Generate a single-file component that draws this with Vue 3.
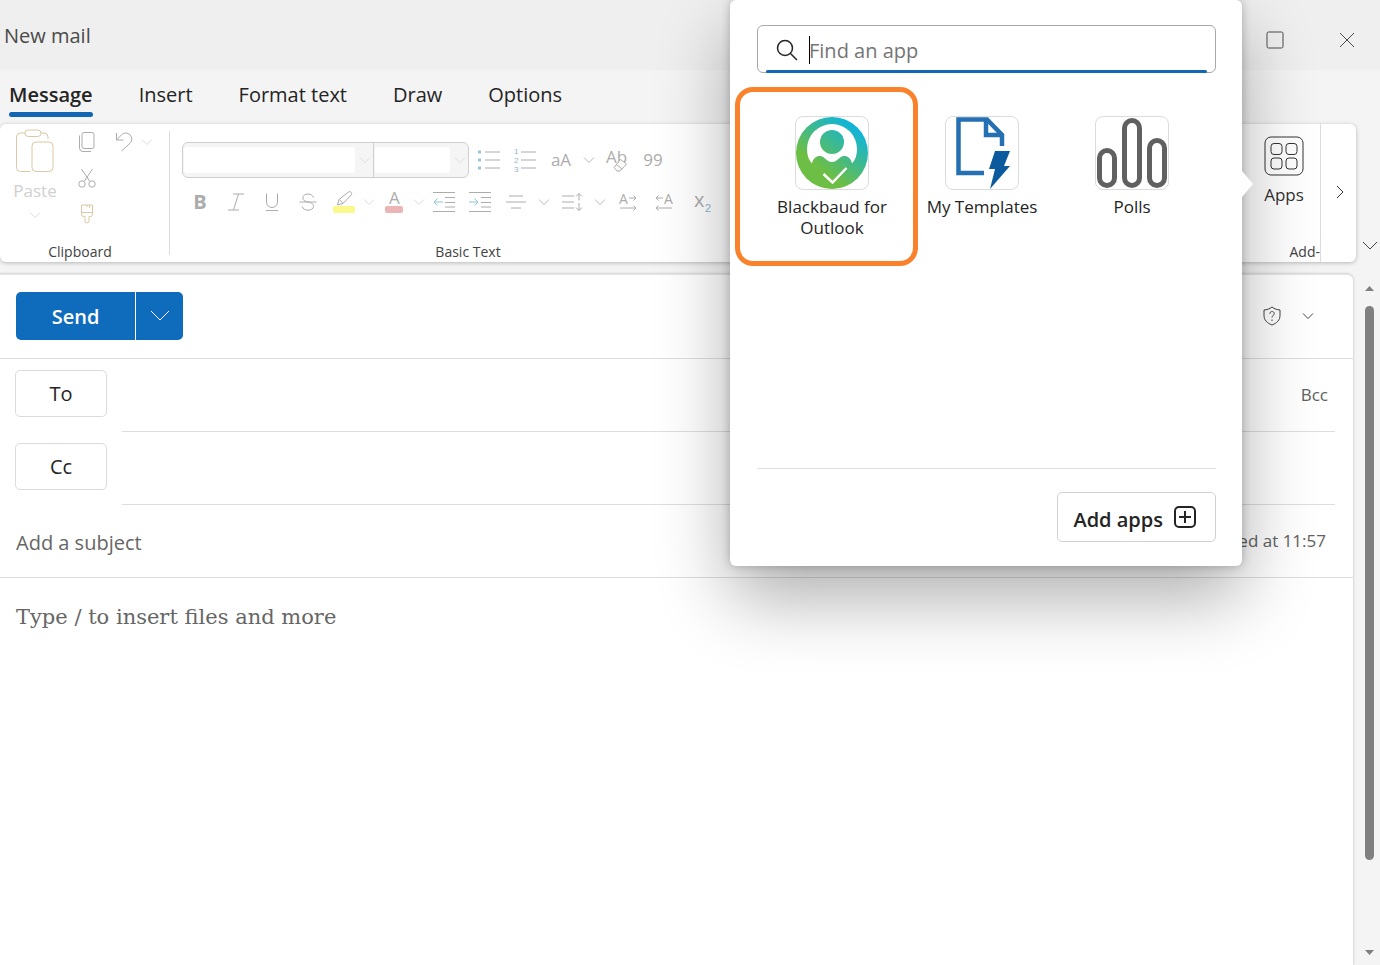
<template>
  <div class="window">
    <svg class="defs" aria-hidden="true">
      <symbol id="chevron" viewBox="0 0 12 12">
        <path d="M1 3.5l5 5 5-5" fill="none" stroke="currentColor" />
      </symbol>
    </svg>

    <header class="title-bar">
      <h1 class="title">New mail</h1>
      <div class="window-buttons">
        <button type="button" aria-label="Maximize">
          <svg width="18" height="18" viewBox="0 0 18 18">
            <rect x="1" y="1" width="16" height="16" rx="1.5" />
          </svg>
        </button>
        <button type="button" aria-label="Close">
          <svg width="18" height="18" viewBox="0 0 18 18">
            <path d="M2 2l14 14M16 2L2 16" />
          </svg>
        </button>
      </div>
    </header>

    <nav class="tabs">
      <button
        v-for="tab in tabs"
        :key="tab"
        type="button"
        :class="['tab', { active: tab === activeTab }]"
        @click="activeTab = tab"
      >
        {{ tab }}
      </button>
    </nav>

    <div class="ribbon-row">
      <div class="ribbon">
        <section class="group clipboard">
          <div class="clipboard-tools">
            <button type="button" class="paste" disabled>
              <svg width="40" height="44" viewBox="0 0 40 44" class="tan">
                <path d="M10 4H5.500a4 4 0 0 0-4 4v30.500a4 4 0 0 0 4 4H15M26 4h3a4 4 0 0 1 4 4v2" />
                <rect x="10" y="1" width="16" height="6.500" rx="3.200" />
                <rect x="17" y="13" width="21" height="29.500" rx="4" />
              </svg>
              <span>Paste</span>
              <svg class="chevron faint" width="12" height="12"><use href="#chevron" /></svg>
            </button>
            <div class="clipboard-small">
              <button type="button" aria-label="Copy" disabled>
                <svg width="20" height="22" viewBox="0 0 20 22">
                  <rect x="5" y="1.500" width="12" height="16" rx="2" />
                  <path d="M2.500 4.500v12.500a3.500 3.500 0 0 0 3.500 3.500h8" />
                </svg>
              </button>
              <button type="button" aria-label="Cut" disabled>
                <svg width="20" height="22" viewBox="0 0 20 22">
                  <path d="M4.500 2l8 12M15.500 2l-8 12" />
                  <circle cx="5" cy="17" r="3.200" />
                  <circle cx="15" cy="17" r="3.200" />
                </svg>
              </button>
              <button type="button" aria-label="Format painter" disabled>
                <svg width="20" height="22" viewBox="0 0 20 22" class="tan">
                  <path
                    d="M4.500 2h11v9.500a2 2 0 0 1-2 2h-1.500v4.500a2 2 0 0 1-4 0v-4.500h-1.500a2 2 0 0 1-2-2zM4.500 9.500h11M12.500 2v3M10 2v2"
                  />
                </svg>
              </button>
            </div>
            <div class="undo">
              <button type="button" aria-label="Undo" disabled>
                <svg width="20" height="22" viewBox="0 0 20 22">
                  <path d="M2.500 2v7h7M2.500 9l5-5.200a6 6 0 0 1 8.600 8.400L7.500 20" />
                </svg>
              </button>
              <svg class="chevron faint" width="12" height="12"><use href="#chevron" /></svg>
            </div>
          </div>
          <span class="group-label">Clipboard</span>
        </section>

        <section class="group basic-text">
          <div class="tool-rows">
            <div class="tool-row">
              <div class="combo font-name">
                <select aria-label="Font" disabled></select>
                <svg class="chevron faint" width="12" height="12"><use href="#chevron" /></svg>
              </div>
              <div class="combo font-size">
                <select aria-label="Font size" disabled></select>
                <svg class="chevron faint" width="12" height="12"><use href="#chevron" /></svg>
              </div>
              <button type="button" class="tool" aria-label="Bullets" disabled>
                <svg width="24" height="24" viewBox="0 0 24 24">
                  <path d="M8 4h15M8 12h15M8 20h15" />
                  <path class="blue-fill" d="M1 2.500h3v3H1zM1 10.500h3v3H1zM1 18.500h3v3H1z" />
                </svg>
              </button>
              <button type="button" class="tool" aria-label="Numbering" disabled>
                <svg width="24" height="24" viewBox="0 0 24 24">
                  <path d="M8 4h15M8 12h15M8 20h15" />
                  <text class="digit" x="1" y="6">1</text>
                  <text class="digit" x="1" y="15">2</text>
                  <text class="digit" x="1" y="24">3</text>
                </svg>
              </button>
              <button type="button" class="tool glyph" disabled>aA</button>
              <span class="drop wide">
                <svg class="chevron" width="12" height="12"><use href="#chevron" /></svg>
              </span>
              <button type="button" class="tool" aria-label="Clear formatting" disabled>
                <svg width="24" height="24" viewBox="0 0 24 24">
                  <text class="letter" x="1" y="15">Ab</text>
                  <path class="cover" d="M15.500 11.500l6 4.500-6.500 7h-3l-3-3.500zM11.500 16.500l5.500 4.500" />
                </svg>
              </button>
              <button type="button" class="tool glyph" aria-label="Quote" disabled>99</button>
            </div>

            <div class="tool-row">
              <button type="button" class="tool bold" aria-label="Bold" disabled>B</button>
              <button type="button" class="tool" aria-label="Italic" disabled>
                <svg width="20" height="20" viewBox="0 0 20 20">
                  <path d="M7 2h11M2 18h11M12.500 2l-5 16" />
                </svg>
              </button>
              <button type="button" class="tool" aria-label="Underline" disabled>
                <svg width="20" height="20" viewBox="0 0 20 20">
                  <path d="M4.500 1.500v8.500a5.500 5.500 0 0 0 11 0V1.500M4 18.500h12" />
                </svg>
              </button>
              <button type="button" class="tool" aria-label="Strikethrough" disabled>
                <svg width="20" height="20" viewBox="0 0 20 20">
                  <path
                    d="M15.500 5.500C14.500 3 12.500 2 10 2 7 2 4.800 3.600 4.800 6c0 2 1.500 3.200 5.200 4 3.900.9 5.500 2 5.500 4.200 0 2.500-2.300 4-5.500 4-2.800 0-5-1.300-5.800-3.700M1.500 10h17"
                  />
                </svg>
              </button>
              <button type="button" class="tool" aria-label="Highlight" disabled>
                <svg width="24" height="24" viewBox="0 0 24 24">
                  <rect class="yellow" x="1" y="16" width="22" height="7" rx="2" />
                  <path
                    d="M5.500 15l1.500-5.500 9.500-7.500c2.200-1.200 4.200 1 2.700 3L11 13.500zM7.500 9.500l3.500 4"
                  />
                </svg>
              </button>
              <span class="drop">
                <svg class="chevron faint" width="12" height="12"><use href="#chevron" /></svg>
              </span>
              <button type="button" class="tool" aria-label="Font color" disabled>
                <svg width="24" height="24" viewBox="0 0 24 24">
                  <text class="letter" x="7" y="14">A</text>
                  <rect class="red" x="3" y="16" width="18" height="7" rx="2" />
                </svg>
              </button>
              <span class="drop">
                <svg class="chevron faint" width="12" height="12"><use href="#chevron" /></svg>
              </span>
              <button type="button" class="tool" aria-label="Decrease indent" disabled>
                <svg width="24" height="24" viewBox="0 0 24 24">
                  <path d="M1 2.500h22M13 7.500h10M13 12.500h10M13 17h10M1 21.500h22" />
                  <path class="blue" d="M11 12H2M5.500 8.500L2 12l3.500 3.500" />
                </svg>
              </button>
              <button type="button" class="tool" aria-label="Increase indent" disabled>
                <svg width="24" height="24" viewBox="0 0 24 24">
                  <path d="M1 2.500h22M13 7.500h10M13 12.500h10M13 17h10M1 21.500h22" />
                  <path class="blue" d="M1 12h9M6.500 8.500L10 12l-3.500 3.500" />
                </svg>
              </button>
              <button type="button" class="tool" aria-label="Align" disabled>
                <svg width="20" height="20" viewBox="0 0 20 20">
                  <path d="M3 4h14M0 10h20M5 16h10" />
                </svg>
              </button>
              <span class="drop wide">
                <svg class="chevron" width="12" height="12"><use href="#chevron" /></svg>
              </span>
              <button type="button" class="tool" aria-label="Line spacing" disabled>
                <svg width="22" height="20" viewBox="0 0 22 20">
                  <path d="M1 4h12M1 10h12M1 16h12M18 1.500v7M15 4.500l3-3 3 3M18 11v7.500M15 15.500l3 3 3-3" />
                </svg>
              </button>
              <span class="drop wide">
                <svg class="chevron" width="12" height="12"><use href="#chevron" /></svg>
              </span>
              <button type="button" class="tool" aria-label="Left to right" disabled>
                <svg width="20" height="20" viewBox="0 0 20 20">
                  <text class="letter small" x="1" y="12">A</text>
                  <path d="M11 6h7M15.500 3.500L18 6l-2.500 2.500M2 16h16M15.500 13.500L18 16l-2.500 2.500" />
                </svg>
              </button>
              <button type="button" class="tool" aria-label="Right to left" disabled>
                <svg width="20" height="20" viewBox="0 0 20 20">
                  <text class="letter small" x="10" y="12">A</text>
                  <path d="M9 6H2M4.500 3.500L2 6l2.500 2.500M18 16H2M4.500 13.500L2 16l2.500 2.500" />
                </svg>
              </button>
              <button type="button" class="tool last" aria-label="Subscript" disabled>
                <svg width="20" height="20" viewBox="0 0 20 20">
                  <text class="letter large" x="1" y="15">x</text>
                  <text class="digit sub" x="12" y="20">2</text>
                </svg>
              </button>
            </div>
          </div>
          <span class="group-label">Basic Text</span>
        </section>

        <section class="group addins">
          <button type="button" class="apps">
            <svg width="40" height="40" viewBox="0 0 40 40">
              <rect x="1" y="1" width="38" height="38" rx="6" />
              <rect x="7" y="7.500" width="11" height="11" rx="3" />
              <rect x="22" y="7.500" width="11" height="11" rx="3" />
              <rect x="7" y="22" width="11" height="11" rx="3" />
              <rect x="22" y="22" width="11" height="11" rx="3" />
            </svg>
            <span>Apps</span>
          </button>
          <span class="group-label">Add-</span>
        </section>

        <button type="button" class="scroll-right" aria-label="More commands">
          <svg width="8" height="14" viewBox="0 0 8 14"><path d="M1 1l6 6-6 6" /></svg>
        </button>
      </div>
      <button type="button" class="collapse" aria-label="Ribbon options">
        <svg width="16" height="10" viewBox="0 0 16 10"><path d="M1 1l7 7 7-7" /></svg>
      </button>
    </div>

    <div class="compose-row">
      <main class="compose">
        <div class="send-row">
          <div class="send-split">
            <button type="button" class="send">Send</button>
            <button type="button" class="send-more" aria-label="More send options">
              <svg width="20" height="12" viewBox="0 0 20 12"><path d="M1 1l9 9 9-9" /></svg>
            </button>
          </div>
          <button type="button" class="sensitivity" aria-label="Sensitivity">
            <svg width="20" height="20" viewBox="0 0 20 20">
              <path
                d="M10 1c2.500 2 5 2.800 8 3v5.500c0 4.500-3 7.500-8 9.500-5-2-8-5-8-9.500V4c3-.2 5.500-1 8-3z"
              />
              <path d="M7.800 7.800c0-3 4.400-3 4.400-.2 0 1.800-2.200 2-2.200 4M10 13.500v1.500" />
            </svg>
            <svg class="chevron" width="12" height="12"><use href="#chevron" /></svg>
          </button>
        </div>

        <div class="recipient">
          <button type="button" class="recipient-button">To</button>
          <div class="field">
            <input v-model="to" type="text" aria-label="To" />
            <a href="#" class="bcc" @click.prevent>Bcc</a>
          </div>
        </div>
        <div class="recipient">
          <button type="button" class="recipient-button">Cc</button>
          <div class="field">
            <input v-model="cc" type="text" aria-label="Cc" />
          </div>
        </div>
        <div class="subject">
          <input v-model="subject" type="text" aria-label="Subject" placeholder="Add a subject" />
          <span class="saved">Draft saved at 11:57</span>
        </div>
        <textarea
          v-model="body"
          class="body"
          aria-label="Message body"
          placeholder="Type / to insert files and more"
        ></textarea>
      </main>

      <div class="scrollbar">
        <svg width="9" height="5" viewBox="0 0 9 5"><path d="M4.500 0L9 5H0z" /></svg>
        <div class="track">
          <div class="thumb" :style="{ height: thumbSize + '%' }"></div>
        </div>
        <svg width="9" height="5" viewBox="0 0 9 5"><path d="M0 0h9L4.500 5z" /></svg>
      </div>
    </div>

    <aside class="flyout">
      <label class="search">
        <svg width="22" height="22" viewBox="0 0 22 22">
          <circle cx="9" cy="9" r="7.500" />
          <path d="M14.500 14.500L21 21" />
        </svg>
        <span class="caret"></span>
        <input v-model="query" type="text" aria-label="Find an app" placeholder="Find an app" />
      </label>

      <div class="apps-grid">
        <button type="button" class="app highlighted">
          <span class="app-icon">
            <svg width="72" height="72" viewBox="0 0 72 72">
              <defs>
                <linearGradient
                  id="badge"
                  gradientUnits="userSpaceOnUse"
                  x1="60"
                  y1="8"
                  x2="26"
                  y2="52"
                >
                  <stop offset="0" stop-color="#0cb4e0" />
                  <stop offset="0.5" stop-color="#3cb991" />
                  <stop offset="1" stop-color="#6cbe45" />
                </linearGradient>
              </defs>
              <circle cx="36" cy="36" r="36" fill="url(#badge)" />
              <path
                fill="#fff"
                d="M36 7a25 25 0 0 0-25 25c0 6 1.500 11 5 14.500 1-5 4-7.500 8-7.500 5 0 6 6 12 6s7-6 12-6c4 0 7 2.500 8 7.500 3.500-3.500 5-8.500 5-14.500A25 25 0 0 0 36 7z"
              />
              <circle cx="36" cy="25" r="12" fill="url(#badge)" />
              <path d="M27.500 57l9 8.500 14-14.500" fill="none" stroke="#fff" stroke-width="2.500" />
            </svg>
          </span>
          <span>Blackbaud for Outlook</span>
        </button>
        <button type="button" class="app">
          <span class="app-icon">
            <svg width="72" height="72" viewBox="0 0 72 72">
              <g fill="none" stroke="#2470b3" stroke-width="4.500">
                <path d="M38 56H12.500V2.500H41L56 18v11" />
                <path d="M40 2v16h17" />
              </g>
              <path fill="#0b5a9d" d="M49 34h15l-6 15h6L44 72l5-20h-6z" />
            </svg>
          </span>
          <span>My Templates</span>
        </button>
        <button type="button" class="app">
          <span class="app-icon">
            <svg width="72" height="72" viewBox="0 0 72 72">
              <g fill="none" stroke="#606060" stroke-width="5">
                <rect x="3.500" y="33.500" width="15" height="35" rx="7.500" />
                <rect x="28.500" y="3.500" width="15" height="65" rx="7.500" />
                <rect x="53.500" y="23.500" width="15" height="45" rx="7.500" />
              </g>
            </svg>
          </span>
          <span>Polls</span>
        </button>
      </div>

      <div class="flyout-footer">
        <button type="button" class="add-apps">
          <span>Add apps</span>
          <svg width="24" height="24" viewBox="0 0 24 24">
            <rect x="2" y="2" width="20" height="20" rx="4" />
            <path d="M12 6v12M6 12h12" />
          </svg>
        </button>
      </div>
    </aside>
  </div>
</template>

<script setup>
import { ref } from "vue";

const tabs = ["Message", "Insert", "Format text", "Draw", "Options"];
const activeTab = ref("Message");

const to = ref("");
const cc = ref("");
const subject = ref("");
const body = ref("");
const query = ref("");

// share of the track taken by the scroll thumb, in percent
const thumbSize = 88;
</script>

<style>
body {
  margin: 0;
}
</style>

<style scoped>
.window {
  position: relative;
  display: flex;
  flex-direction: column;
  min-height: 100vh;
  overflow: hidden;
  background: #f4f4f4;
  color: #242424;
  font-family: "Open Sans", "Noto Sans", sans-serif;
  font-size: 20px;
  line-height: 28px;
}

.window *,
.window *::before,
.window *::after {
  box-sizing: border-box;
}

.defs {
  position: absolute;
  width: 0;
  height: 0;
}

button,
input,
select,
textarea {
  margin: 0;
  padding: 0;
  border: none;
  outline: none;
  background: none;
  color: inherit;
  font: inherit;
}

svg {
  display: block;
  flex: none;
  overflow: visible;
  fill: none;
  stroke: currentColor;
}

/* Title bar */
.title-bar {
  display: flex;
  align-items: center;
  justify-content: space-between;
  height: 70px;
  padding-left: 4px;
  background: #efefef;
  color: #4a4a4a;
}

.title {
  margin: 0;
  padding-top: 2px;
  font-size: 20px;
  font-weight: 400;
}

.window-buttons {
  display: flex;
  gap: 6px;
  padding-top: 10px;
}

.window-buttons button {
  display: flex;
  align-items: center;
  justify-content: center;
  width: 66px;
  height: 40px;
}

/* Tabs */
.tabs {
  display: flex;
  gap: 46px;
  height: 54px;
  padding: 11px 9px 7px;
}

.tab {
  height: 36px;
  padding-bottom: 4px;
  border-bottom: 5px solid transparent;
  white-space: nowrap;
}

.tab.active {
  position: relative;
  font-weight: 600;
}

.tab.active::after {
  content: "";
  position: absolute;
  right: 0;
  bottom: -5px;
  left: 0;
  height: 5px;
  border-radius: 3px;
  background: #1267b4;
}

/* Ribbon */
.ribbon-row {
  display: flex;
  height: 138px;
}

.ribbon {
  display: flex;
  flex: 1;
  min-width: 0;
  border-radius: 6px;
  background: #fff;
  box-shadow: 0 1px 4px rgba(0, 0, 0, 0.25);
  color: #acacac;
}

.group {
  display: flex;
  flex-direction: column;
  justify-content: space-between;
}

.group-label {
  color: #424242;
  font-size: 14px;
  line-height: 20px;
  text-align: center;
}

.clipboard {
  position: relative;
  width: 170px;
  padding: 5px 0 0;
}

.clipboard .group-label {
  padding-right: 10px;
}

.clipboard::after {
  content: "";
  position: absolute;
  top: 7px;
  right: 0;
  bottom: 7px;
  border-right: 1px solid #dcdcdc;
}

.clipboard-tools {
  display: flex;
}

.paste {
  display: flex;
  flex-direction: column;
  align-items: center;
  width: 70px;
  color: #d0d0d0;
  font-size: 17px;
  line-height: 36px;
}

.tan {
  color: #dac8a4;
}

.clipboard-small {
  display: flex;
  flex-direction: column;
  gap: 14px;
  padding: 2px 7px;
}

.undo {
  display: flex;
  align-items: center;
  align-self: flex-start;
  gap: 7px;
  padding: 2px 0 0 10px;
}

.chevron {
  color: #b8b8b8;
}

.chevron.faint {
  color: #dcdcdc;
}

.basic-text {
  width: 596px;
  padding: 18px 12px 0;
}

.tool-rows {
  display: flex;
  flex-direction: column;
  gap: 6px;
}

.tool-row {
  display: flex;
  align-items: center;
  height: 36px;
}

.combo {
  display: flex;
  align-items: center;
  justify-content: space-between;
  height: 36px;
  padding: 5px 2px 5px 1px;
  border: 1px solid #cfcfcf;
  background: #f5f5f5;
}

.combo select {
  flex: 1;
  height: 26px;
  margin-right: 4px;
  border-radius: 3px;
  background: #fff;
  opacity: 1;
  appearance: none;
}

.font-name {
  width: 192px;
  border-radius: 6px 0 0 6px;
}

.font-size {
  width: 96px;
  margin-left: -1px;
  margin-right: 2px;
  border-radius: 0 6px 6px 0;
}

.tool {
  display: flex;
  align-items: center;
  justify-content: center;
  width: 36px;
  height: 36px;
}

.tool.last {
  width: 42px;
}

.tool.glyph {
  font-size: 17px;
}

.tool.bold {
  font-weight: 700;
}

.drop {
  display: flex;
  justify-content: center;
  width: 14px;
}

.drop.wide {
  width: 20px;
}

.letter {
  fill: currentColor;
  stroke: none;
  font-size: 17px;
}

.letter.small {
  font-size: 14px;
}

.letter.large {
  font-size: 20px;
}

.digit {
  fill: #8db8d2;
  stroke: none;
  font-family: "Liberation Sans", sans-serif;
  font-size: 8px;
}

.digit.sub {
  font-size: 11px;
}

.cover {
  fill: #fff;
}

.blue {
  stroke: #8fc3dd;
}

.blue-fill {
  fill: #9cc4d8;
  stroke: none;
}

.yellow {
  fill: #fbf98c;
  stroke: none;
}

.red {
  fill: #ebb5b5;
  stroke: none;
}

.addins {
  width: 80px;
  margin-left: auto;
  padding: 12px 0 0;
  color: #4a4a4a;
}

.addins .group-label {
  text-align: right;
}

.apps {
  display: flex;
  flex-direction: column;
  align-items: center;
  gap: 5px;
  width: 88px;
  color: #333;
  font-size: 17px;
}

.scroll-right {
  display: flex;
  align-items: center;
  justify-content: center;
  width: 36px;
  padding: 0 0 2px 2px;
  border-left: 1px solid #dcdcdc;
  border-radius: 0 6px 6px 0;
  color: #333;
}

.collapse {
  display: flex;
  align-items: flex-end;
  justify-content: flex-end;
  width: 24px;
  padding: 0 2px 11px 0;
  color: #444;
}

.sensitivity .chevron {
  color: #444;
}

/* Compose pane */
.compose-row {
  display: flex;
  flex: 1;
  margin-top: 12px;
}

.compose {
  display: flex;
  flex: 1;
  flex-direction: column;
  min-width: 0;
  border-top: 1px solid #e4e4e4;
  border-radius: 0 6px 0 0;
  background: #fff;
  box-shadow: 0 0 3px rgba(0, 0, 0, 0.25);
}

.send-row {
  display: flex;
  align-items: center;
  justify-content: space-between;
  height: 84px;
  padding: 0 39px 2px 16px;
  border-bottom: 1px solid #dedede;
}

.send-split {
  display: flex;
  height: 48px;
  border-radius: 5px;
  overflow: hidden;
  background: #0f6cbd;
  color: #fff;
}

.send {
  width: 120px;
  padding-top: 2px;
  border-right: 1px solid #fff;
  font-weight: 600;
}

.send-more {
  display: flex;
  align-items: center;
  justify-content: center;
  width: 47px;
}

.sensitivity {
  display: flex;
  align-items: center;
  gap: 20px;
  color: #424242;
}

.recipient {
  display: flex;
  align-items: center;
  gap: 15px;
  height: 73px;
  padding: 0 18px 0 15px;
}

.recipient-button {
  width: 92px;
  height: 47px;
  margin-bottom: 4px;
  border: 1px solid #dcdcdc;
  border-radius: 5px;
  font-weight: 500;
}

.field {
  display: flex;
  flex: 1;
  align-items: center;
  align-self: stretch;
  padding-right: 7px;
  border-bottom: 1px solid #dedede;
}

.field input,
.subject input {
  flex: 1;
  min-width: 0;
}

.subject input {
  padding-top: 4px;
}

.bcc,
.saved {
  color: #616161;
  font-size: 17px;
  text-decoration: none;
}

.subject {
  display: flex;
  align-items: center;
  height: 73px;
  padding: 0 27px 0 16px;
  border-bottom: 1px solid #dedede;
}

input::placeholder,
textarea::placeholder {
  color: #666;
  opacity: 1;
}

.body {
  flex: 1;
  width: 100%;
  padding: 25px 16px;
  resize: none;
  font-family: "DejaVu Serif", "Liberation Serif", serif;
  font-size: 21px;
}

.scrollbar {
  display: flex;
  flex-direction: column;
  align-items: center;
  gap: 15px;
  width: 27px;
  padding: 12px 0 10px 6px;
}

.scrollbar svg {
  fill: #7f7f7f;
  stroke: none;
}

.track {
  flex: 1;
  width: 9px;
}

.thumb {
  border-radius: 5px;
  background: #808080;
}

/* Apps flyout */
.flyout {
  position: absolute;
  top: 0;
  right: 138px;
  width: 512px;
  padding: 25px 26px 24px 27px;
  border-radius: 6px;
  background: #fff;
  box-shadow:
    0 32px 72px rgba(0, 0, 0, 0.32),
    0 0 10px rgba(0, 0, 0, 0.24);
}

.flyout::after {
  content: "";
  position: absolute;
  top: 171px;
  left: 100%;
  border: 13px solid transparent;
  border-right-width: 0;
  border-left: 11px solid #fff;
}

.search {
  position: relative;
  display: flex;
  align-items: center;
  height: 48px;
  padding: 2px 18px 0;
  border: 1px solid #a8a8a8;
  border-radius: 6px;
}

.search::after {
  content: "";
  position: absolute;
  right: 8px;
  bottom: -1px;
  left: 8px;
  height: 3px;
  border-radius: 2px;
  background: #1267b4;
}

.search svg {
  stroke-width: 1.5;
}

.caret {
  width: 1px;
  height: 28px;
  margin-right: -1px;
  margin-left: 11px;
  background: #000;
}

.search input {
  flex: 1;
  min-width: 0;
  padding-top: 2px;
}

.search input::placeholder {
  color: #757575;
}

.apps-grid {
  display: flex;
  align-items: flex-start;
  min-height: 395px;
  padding-top: 43px;
}

.app {
  display: flex;
  flex-direction: column;
  align-items: center;
  gap: 6px;
  width: 150px;
  padding: 0 15px;
  font-size: 17px;
  line-height: 21px;
}

.app-icon {
  width: 74px;
  height: 74px;
  border: 1px solid #dcdcdc;
  border-radius: 8px;
  overflow: hidden;
}

.app-icon svg {
  stroke: none;
}

.highlighted {
  position: relative;
}

.highlighted::before {
  content: "";
  position: absolute;
  top: -29px;
  left: -22px;
  width: 183px;
  height: 179px;
  border: 5px solid #fa822d;
  border-radius: 18px;
}

.flyout-footer {
  display: flex;
  justify-content: flex-end;
  padding-top: 23px;
  border-top: 1px solid #dedede;
}

.add-apps {
  display: flex;
  align-items: center;
  gap: 10px;
  height: 50px;
  padding: 0 18px 0 15px;
  border: 1px solid #d1d1d1;
  border-radius: 5px;
  font-weight: 600;
}

.add-apps span {
  padding-top: 6px;
}

.add-apps svg {
  stroke-width: 2;
}
</style>
